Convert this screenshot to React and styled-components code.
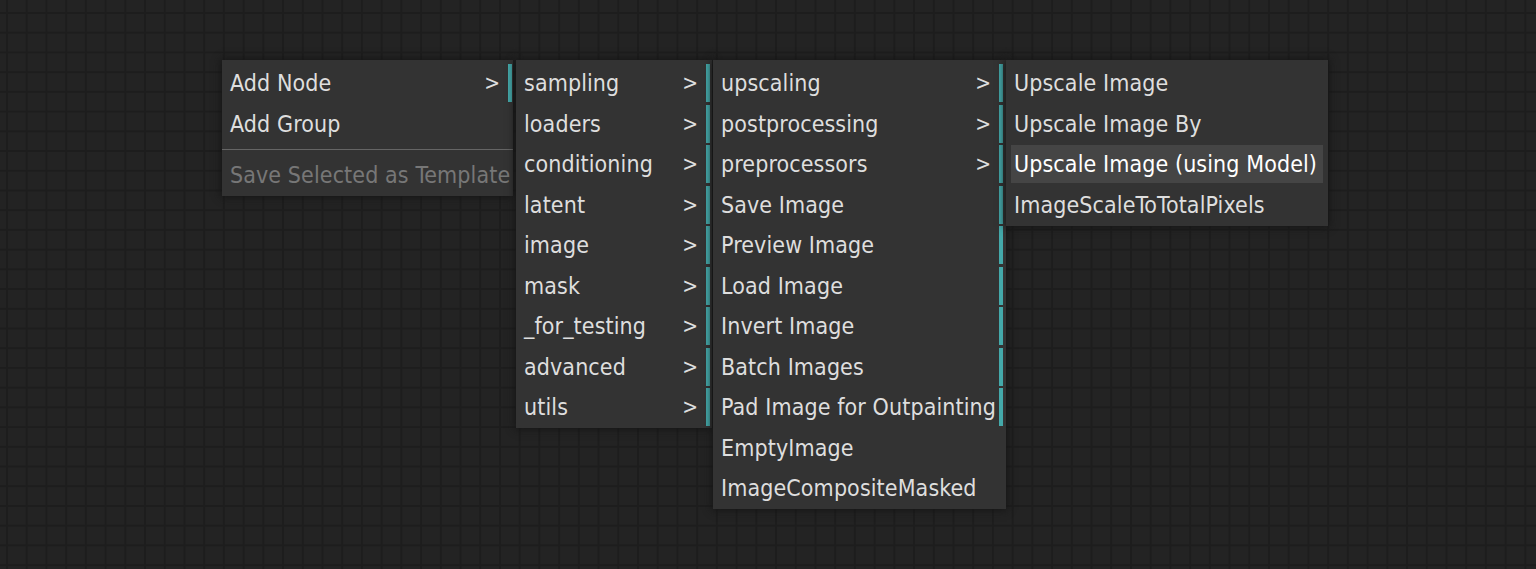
import styled, {createGlobalStyle} from "styled-components";

const GlobalStyle = createGlobalStyle`
  html, body {
    margin: 0;
    padding: 0;
    background: #222;
  }
`

const Canvas = styled.div`
  width: 1536px;
  height: 569px;
  overflow: hidden;
  background-color: #232323;
  background-image:
    linear-gradient(to right, #1d1d1d 2px, transparent 2px),
    linear-gradient(to bottom, #1d1d1d 2px, transparent 2px);
  background-size: 19.72px 19.72px;
  background-position: 6px 12px;

  display: flex;
  align-items: flex-start;
  padding: 60px 0 0 222px;
  box-sizing: border-box;
  font-family: "DejaVu Sans Condensed", "DejaVu Sans", sans-serif;
`

const Menu = styled.div`
  width: ${p => p.width}px;
  margin-left: ${p => p.offset || 0}px;
  flex-shrink: 0;
  box-sizing: border-box;
  background-color: #333;
  box-shadow: 0 0 8px 1px #151515;
  padding: 4px 0 2px 0;

  display: flex;
  flex-direction: column;
  gap: 2.5px;
`

const Entry = styled.div`
  height: 38px;
  margin: 0 ${p => p.right}px 0 5px;
  padding: 0 8px 0 3px;
  box-sizing: border-box;

  display: flex;
  align-items: center;
  justify-content: space-between;
  white-space: nowrap;

  font-size: 23px;
  letter-spacing: 0.1px;
  color: ${p => p.disabled ? "#777" : p.active ? "#fff" : "#dedede"};
  background-color: ${p => p.active ? "#454545" : "transparent"};
  border-right: 4px solid ${p => p.submenu ? "#44a9aa" : "transparent"};
`

const Chevron = styled.span`
  color: #dedede;
  font-size: 21px;
  letter-spacing: 0;
`

const Separator = styled.div`
  height: 8px;
  box-sizing: border-box;
  border-bottom: 1px solid #656565;
  margin-top: -3px;
  margin-bottom: 3px;
`

const menus = [
  {
    width: 291, offset: 0, right: 1,
    items: [
      {label: "Add Node", submenu: true},
      {label: "Add Group"},
      {separator: true},
      {label: "Save Selected as Template", disabled: true},
    ],
  },
  {
    width: 196, offset: 3, right: 2,
    items: ["sampling", "loaders", "conditioning", "latent", "image", "mask", "_for_testing", "advanced", "utils"]
      .map(label => ({label, submenu: true})),
  },
  {
    width: 293, offset: 1, right: 3,
    items: [
      {label: "upscaling", submenu: true},
      {label: "postprocessing", submenu: true},
      {label: "preprocessors", submenu: true},
      {label: "Save Image", submenu: true},
      {label: "Preview Image", submenu: true},
      {label: "Load Image", submenu: true},
      {label: "Invert Image", submenu: true},
      {label: "Batch Images", submenu: true},
      {label: "Pad Image for Outpainting", submenu: true},
      {label: "EmptyImage"},
      {label: "ImageCompositeMasked"},
    ],
  },
  {
    width: 322, offset: 0, right: 5,
    items: [
      {label: "Upscale Image"},
      {label: "Upscale Image By"},
      {label: "Upscale Image (using Model)", active: true},
      {label: "ImageScaleToTotalPixels"},
    ],
  },
]

// only the entries that open a deeper menu show the ">" mark
const chevronFor = (menuIndex, item) =>
  item.submenu && (menuIndex < 2 || ["upscaling", "postprocessing", "preprocessors"].includes(item.label))

export default function App() {
  return (
    <>
      <GlobalStyle/>
      <Canvas>
        {menus.map((m, mi) => (
          <Menu key={mi} width={m.width} offset={m.offset}>
            {m.items.map((item, i) => item.separator
              ? <Separator key={i}/>
              : (
                <Entry
                  key={i}
                  right={m.right}
                  submenu={item.submenu}
                  disabled={item.disabled}
                  active={item.active}>
                  <span>{item.label}</span>
                  {chevronFor(mi, item) && <Chevron>&gt;</Chevron>}
                </Entry>
              ))}
          </Menu>
        ))}
      </Canvas>
    </>
  )
}
